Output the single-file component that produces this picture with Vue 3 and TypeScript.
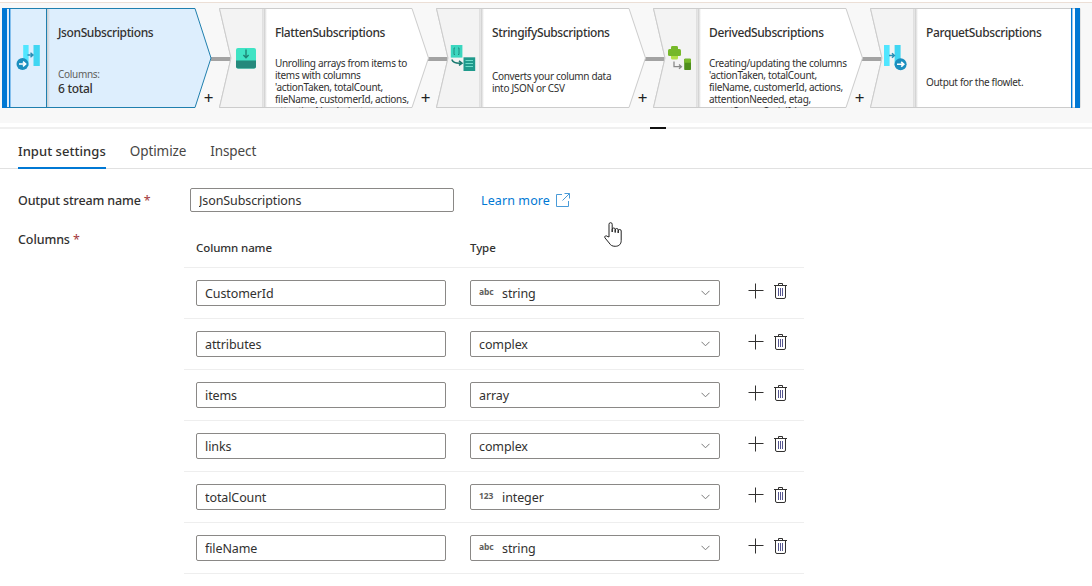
<script setup lang="ts">
type NodeKind = 'first' | 'middle' | 'last'
type IconKind = 'source' | 'flatten' | 'stringify' | 'derive' | 'sink'

interface FlowNode {
  title: string
  kind: NodeKind
  icon: IconKind
  lines: string[]
}

interface Column {
  name: string
  type: string
  badge?: string
}

const nodes: FlowNode[] = [
  { title: 'JsonSubscriptions', kind: 'first', icon: 'source', lines: [] },
  {
    title: 'FlattenSubscriptions',
    kind: 'middle',
    icon: 'flatten',
    lines: [
      'Unrolling arrays from items to',
      'items with columns',
      "'actionTaken, totalCount,",
      'fileName, customerId, actions,',
      'attentionNeeded, etag,',
    ],
  },
  {
    title: 'StringifySubscriptions',
    kind: 'middle',
    icon: 'stringify',
    lines: ['Converts your column data', 'into JSON or CSV'],
  },
  {
    title: 'DerivedSubscriptions',
    kind: 'middle',
    icon: 'derive',
    lines: [
      'Creating/updating the columns',
      "'actionTaken, totalCount,",
      'fileName, customerId, actions,',
      'attentionNeeded, etag,',
      'eventSourceSerialId,',
    ],
  },
  { title: 'ParquetSubscriptions', kind: 'last', icon: 'sink', lines: ['Output for the flowlet.'] },
]

const columns: Column[] = [
  { name: 'CustomerId', type: 'string', badge: 'abc' },
  { name: 'attributes', type: 'complex' },
  { name: 'items', type: 'array' },
  { name: 'links', type: 'complex' },
  { name: 'totalCount', type: 'integer', badge: '123' },
  { name: 'fileName', type: 'string', badge: 'abc' },
]

const tabs: string[] = ['Input settings', 'Optimize', 'Inspect']

function outline(kind: NodeKind): string {
  if (kind === 'first') return '0.5,0.5 193,0.5 209,50 193,99.5 0.5,99.5'
  if (kind === 'last') return '0.5,0.5 210,0.5 210,99.5 0.5,99.5 12,50'
  return '0.5,0.5 193,0.5 209.5,50 193,99.5 0.5,99.5 12,50'
}

function panel(kind: NodeKind): string {
  if (kind === 'first') return '0.5,0.5 44,0.5 44,99.5 0.5,99.5'
  return '0.5,0.5 44,0.5 44,99.5 0.5,99.5 12,50'
}
</script>

<template>
  <div class="page">
    <div class="canvas">
      <div v-for="(node, i) in nodes" :key="node.title" class="node">
        <svg class="shape" width="228" height="100" viewBox="0 0 228 100">
          <defs>
            <linearGradient :id="`shade-${i}`" x1="0" y1="0" x2="1" y2="0">
              <stop offset="0" stop-color="#cccccc" />
              <stop offset="1" stop-color="#cccccc" stop-opacity="0" />
            </linearGradient>
          </defs>
          <rect v-if="node.kind !== 'last'" x="209" y="49" width="20" height="4" fill="#a3a3a3" />
          <polygon
            :points="outline(node.kind)"
            :fill="node.kind === 'first' ? '#ddeefd' : '#ffffff'"
            :stroke="node.kind === 'first' ? '#1f7fae' : '#cccccc'"
            stroke-width="1"
          />
          <polygon v-if="node.kind !== 'first'" :points="panel(node.kind)" fill="#f3f3f3" stroke="#cccccc" />
          <line v-else x1="44.5" y1="0" x2="44.5" y2="100" stroke="#1f7fae" />
          <rect x="45" y="1" width="3" height="98" :fill="`url(#shade-${i})`" />
          <g v-if="node.kind === 'first'">
            <rect x="0" y="0" width="5" height="100" fill="#0078d4" />
            <rect x="7" y="0" width="1.4" height="100" fill="#0078d4" />
          </g>
          <g v-if="node.kind === 'last'">
            <rect x="201" y="0" width="1.4" height="100" fill="#0078d4" />
            <rect x="205" y="0" width="5" height="100" fill="#0078d4" />
          </g>
        </svg>

        <div class="icon-slot">
          <svg width="26" height="26" viewBox="0 0 26 26">
            <template v-if="node.icon === 'source'">
              <rect x="7.2" y="0" width="5.4" height="21" fill="#50e6ff" />
              <rect x="17.5" y="0" width="6.3" height="21" fill="#3fd6f2" />
              <path d="M11.5 10 H17 M14.5 7.8 L17 10 L14.5 12.2" fill="none" stroke="#2a8fb5" stroke-width="1.4" />
              <circle cx="6.5" cy="19" r="6" fill="#1b8fbf" />
              <path d="M3 19 H9.5 M7 16.6 L9.6 19 L7 21.4" fill="none" stroke="#ffffff" stroke-width="1.6" />
            </template>
            <template v-else-if="node.icon === 'flatten'">
              <rect x="3" y="3" width="20" height="20.5" rx="2" fill="#3fe3c4" />
              <path d="M3 15.5 H23 V21.5 a2 2 0 0 1 -2 2 H5 a2 2 0 0 1 -2 -2 Z" fill="#25897c" />
              <path d="M13 4.5 V12.5 M10.4 10 L13 12.8 L15.6 10" fill="none" stroke="#1f8576" stroke-width="1.4" />
            </template>
            <template v-else-if="node.icon === 'stringify'">
              <rect x="0.8" y="0" width="11.6" height="12.6" fill="#3bd6bf" />
              <path d="M5 3 H4 V9.5 H5 M8 3 H9 V9.5 H8" fill="none" stroke="#1f8f82" />
              <rect x="13.5" y="12.3" width="11.7" height="13.7" fill="#1f9a8c" />
              <path d="M15.5 15.5 H23 M15.5 18.5 H23 M15.5 21.5 H23" stroke="#6fdcc9" />
              <path d="M1.8 14.5 C3 17.5 7 18.6 11.5 18.2 M9 15.8 L12 18.2 L9 20.4" fill="none" stroke="#1b7a70" stroke-width="1.6" />
            </template>
            <template v-else-if="node.icon === 'derive'">
              <rect x="4" y="1" width="7" height="13.5" rx="1.5" fill="#b4e04a" />
              <rect x="1" y="4" width="13" height="7" rx="1.5" fill="#76b82a" />
              <rect x="4" y="1" width="7" height="7" rx="1.5" fill="#76b82a" />
              <path d="M7 16.5 V21.7 H14 M12 19.6 L14.4 21.7 L12 23.8" fill="none" stroke="#8a8a8a" stroke-width="1.3" />
              <rect x="17.2" y="13.7" width="6.8" height="11.3" rx="0.8" fill="#4f8f1c" />
              <rect x="17.2" y="13.7" width="6.8" height="4" rx="0.8" fill="#76b82a" />
            </template>
            <template v-else>
              <rect x="0" y="0" width="5.6" height="21" fill="#50e6ff" />
              <rect x="10.6" y="0" width="6" height="21" fill="#3fd6f2" />
              <path d="M5 10.5 H10 M8 8.3 L10.4 10.5 L8 12.7" fill="none" stroke="#2a8fb5" stroke-width="1.4" />
              <circle cx="16.6" cy="19.3" r="6" fill="#1b8fbf" />
              <path d="M13 19.3 H19.6 M17.2 16.9 L19.8 19.3 L17.2 21.7" fill="none" stroke="#ffffff" stroke-width="1.6" />
            </template>
          </svg>
        </div>

        <div class="node-body">
          <div class="node-title">{{ node.title }}</div>
          <div class="node-desc">
            <template v-if="node.kind === 'first'">
              <div class="col-label">Columns:</div>
              <div class="col-total">6 total</div>
            </template>
            <template v-else>
              <div v-for="line in node.lines" :key="line" class="desc-line">{{ line }}</div>
            </template>
          </div>
        </div>

        <span v-if="node.kind !== 'last'" class="plus">+</span>
      </div>
    </div>

    <div class="splitter"><span class="handle"></span></div>

    <div class="tabs">
      <span v-for="(tab, i) in tabs" :key="tab" class="tab" :class="{ active: i === 0 }">{{ tab }}</span>
    </div>

    <div class="form">
      <div class="stream-row">
        <label class="stream-label">Output stream name <em>*</em></label>
        <input class="stream-input" value="JsonSubscriptions" readonly />
        <a class="learn" href="#" @click.prevent>
          Learn more
          <svg width="14" height="14" viewBox="0 0 14 14" fill="none" stroke="#4a9bd8">
            <path d="M6 1.5 H0.5 V13.5 H12.5 V8" />
            <path d="M8.5 0.5 H13.5 V5.5 M13.5 0.5 L6.5 7.5" />
          </svg>
        </a>
      </div>

      <div class="columns-row">
        <div class="columns-label">Columns <em>*</em></div>
        <div class="table">
          <div class="thead">
            <span class="th-name">Column name</span>
            <span>Type</span>
          </div>
          <div v-for="col in columns" :key="col.name" class="tr">
            <input class="cell-input" :value="col.name" readonly />
            <div class="select">
              <span v-if="col.badge" class="badge">{{ col.badge }}</span>
              <span class="select-text">{{ col.type }}</span>
              <svg class="chevron" width="9" height="6" viewBox="0 0 9 6" fill="none" stroke="#7a7a7a">
                <path d="M0.5 0.8 L4.5 4.8 L8.5 0.8" />
              </svg>
            </div>
            <div class="actions">
              <svg width="16" height="16" viewBox="0 0 16 16" stroke="#323130" fill="none">
                <path d="M0.5 7.5 H15.5 M7.5 0.5 V15.5" />
              </svg>
              <svg width="13" height="16" viewBox="0 0 13 16" stroke="#323130" fill="none">
                <path d="M4.5 2 V0.5 H8.5 V2 M0 2.5 H13 M1.5 2.5 V14 A1.5 1.5 0 0 0 3 15.5 H10 A1.5 1.5 0 0 0 11.5 14 V2.5" />
                <path d="M4.5 5 V13 M6.5 5 V13 M8.5 5 V13" stroke="#55558f" />
              </svg>
            </div>
          </div>
        </div>
      </div>
    </div>

    <svg class="cursor" width="19" height="25" viewBox="0 0 19 25" fill="#ffffff" stroke="#222222" stroke-width="1">
      <path d="M5 15 V2.3 a1.6 1.6 0 0 1 3.2 0 V10 V7.5 a1.5 1.5 0 0 1 3 0 V10.5 V8 a1.5 1.5 0 0 1 3 0 V11 V9 a1.5 1.5 0 0 1 3 0 V18.5 c0 3.5 -2 5.8 -6 5.8 c-3 0 -4.6 -1 -6 -3.3 L0.9 15.8 c-0.8 -1.6 1.2 -2.7 2.2 -1.5 Z" />
    </svg>
  </div>
</template>

<style scoped>
.page {
  position: relative;
  width: 1092px;
  height: 586px;
  overflow: hidden;
  background: #ffffff;
  color: #323130;
  font-family: 'Noto Sans', 'Open Sans', sans-serif;
  font-size: 13px;
}
.canvas {
  display: flex;
  box-sizing: border-box;
  height: 121px;
  margin-top: 2px;
  padding: 5px 0 0 2px;
  background: #f8f8f8;
  border-top: 1px solid #ecdfd6;
}
.node {
  position: relative;
  display: flex;
  flex: 0 0 217px;
  height: 100px;
}
.shape {
  position: absolute;
  left: 0;
  top: 0;
  overflow: visible;
}
.icon-slot {
  position: relative;
  display: flex;
  align-items: center;
  flex: 0 0 45px;
  box-sizing: border-box;
  padding-left: 13.5px;
}
.node-body {
  position: relative;
  display: flex;
  flex-direction: column;
  box-sizing: border-box;
  width: 155px;
  height: 99px;
  margin-top: 1px;
  padding-left: 11px;
  overflow: hidden;
}
.node-title {
  flex: none;
  margin-top: 15px;
  height: 18px;
  line-height: 18px;
  font-size: 12px;
  font-weight: 500;
  letter-spacing: -0.38px;
  white-space: nowrap;
}
.node-desc {
  flex: none;
  display: flex;
  flex-direction: column;
  justify-content: safe center;
  height: 49px;
  margin-top: 15px;
}
.desc-line {
  flex: none;
  height: 12px;
  line-height: 12px;
  font-size: 10px;
  letter-spacing: -0.32px;
  white-space: nowrap;
}
.col-label {
  line-height: 13px;
  font-size: 10px;
  letter-spacing: -0.3px;
  color: #605e5c;
}
.col-total {
  line-height: 15px;
  font-size: 12px;
  font-weight: 500;
  letter-spacing: -0.3px;
}
.plus {
  position: absolute;
  left: 199.5px;
  top: 81px;
  width: 14px;
  line-height: 18px;
  text-align: center;
  font-size: 17px;
  color: #222222;
}
.splitter {
  position: relative;
  height: 2px;
  margin-top: 4px;
  background: #f0f0f0;
}
.handle {
  position: absolute;
  left: 650px;
  top: 0;
  width: 16px;
  height: 2px;
  background: #111111;
}
.tabs {
  display: flex;
  gap: 24px;
  box-sizing: border-box;
  height: 40px;
  padding: 0 18px;
  border-bottom: 1px solid #e1e1e1;
}
.tab {
  height: 40px;
  box-sizing: border-box;
  padding-top: 12px;
  line-height: 20px;
  font-size: 13.5px;
  letter-spacing: -0.1px;
  color: #484644;
}
.tab.active {
  font-size: 13px;
  font-weight: 500;
  letter-spacing: 0.05px;
  color: #323130;
  border-bottom: 2px solid #0078d4;
}
.form {
  padding: 19px 0 0 18px;
}
.stream-row {
  display: flex;
  align-items: center;
  height: 24px;
}
.stream-label {
  flex: 0 0 172px;
  font-weight: 500;
  font-size: 12.5px;
  letter-spacing: -0.15px;
}
em {
  font-style: normal;
  font-weight: 400;
  color: #a4373a;
}
input {
  box-sizing: border-box;
  border: 1px solid #8a8886;
  border-radius: 2px;
  outline: none;
  background: #ffffff;
  color: #323130;
  font-family: inherit;
  font-size: 12.5px;
  letter-spacing: -0.1px;
}
.stream-input {
  width: 264px;
  height: 24px;
  padding: 0 8px;
}
.learn {
  display: flex;
  align-items: center;
  gap: 6px;
  margin-left: 27px;
  color: #0078d4;
  text-decoration: none;
  font-size: 12.5px;
  letter-spacing: 0.1px;
}
.columns-row {
  display: flex;
  margin-top: 18px;
}
.columns-label {
  flex: 0 0 166px;
  height: 18px;
  margin-top: 0.5px;
  line-height: 18px;
  font-weight: 500;
  font-size: 12.5px;
  letter-spacing: -0.1px;
}
.table {
  width: 620px;
}
.thead {
  display: flex;
  align-items: center;
  height: 38px;
  padding: 0 0 2px 12px;
  border-bottom: 1px solid #eeeeee;
  font-size: 11.5px;
  font-weight: 500;
  letter-spacing: -0.1px;
  box-sizing: border-box;
}
.th-name {
  flex: 0 0 274px;
}
.tr {
  display: flex;
  box-sizing: border-box;
  height: 51px;
  padding: 12px 0 0 12px;
  border-bottom: 1px solid #eeeeee;
}
.cell-input {
  width: 250px;
  height: 26px;
  padding: 0 8px;
}
.select {
  display: flex;
  align-items: center;
  box-sizing: border-box;
  width: 250px;
  height: 26px;
  margin-left: 24px;
  padding: 0 9px 0 8px;
  border: 1px solid #8a8886;
  border-radius: 2px;
  font-size: 12.5px;
  letter-spacing: -0.1px;
}
.badge {
  flex: 0 0 23px;
  margin-top: -3px;
  font-size: 8.5px;
  font-weight: 700;
  color: #605e5c;
}
.select-text {
  flex: 1;
}
.chevron {
  flex: none;
}
.actions {
  display: flex;
  gap: 10px;
  margin: 3px 0 0 28px;
  align-self: flex-start;
}
.cursor {
  position: absolute;
  left: 604px;
  top: 222px;
}
</style>

<style>
html,
body {
  margin: 0;
  background: #ffffff;
}
</style>
